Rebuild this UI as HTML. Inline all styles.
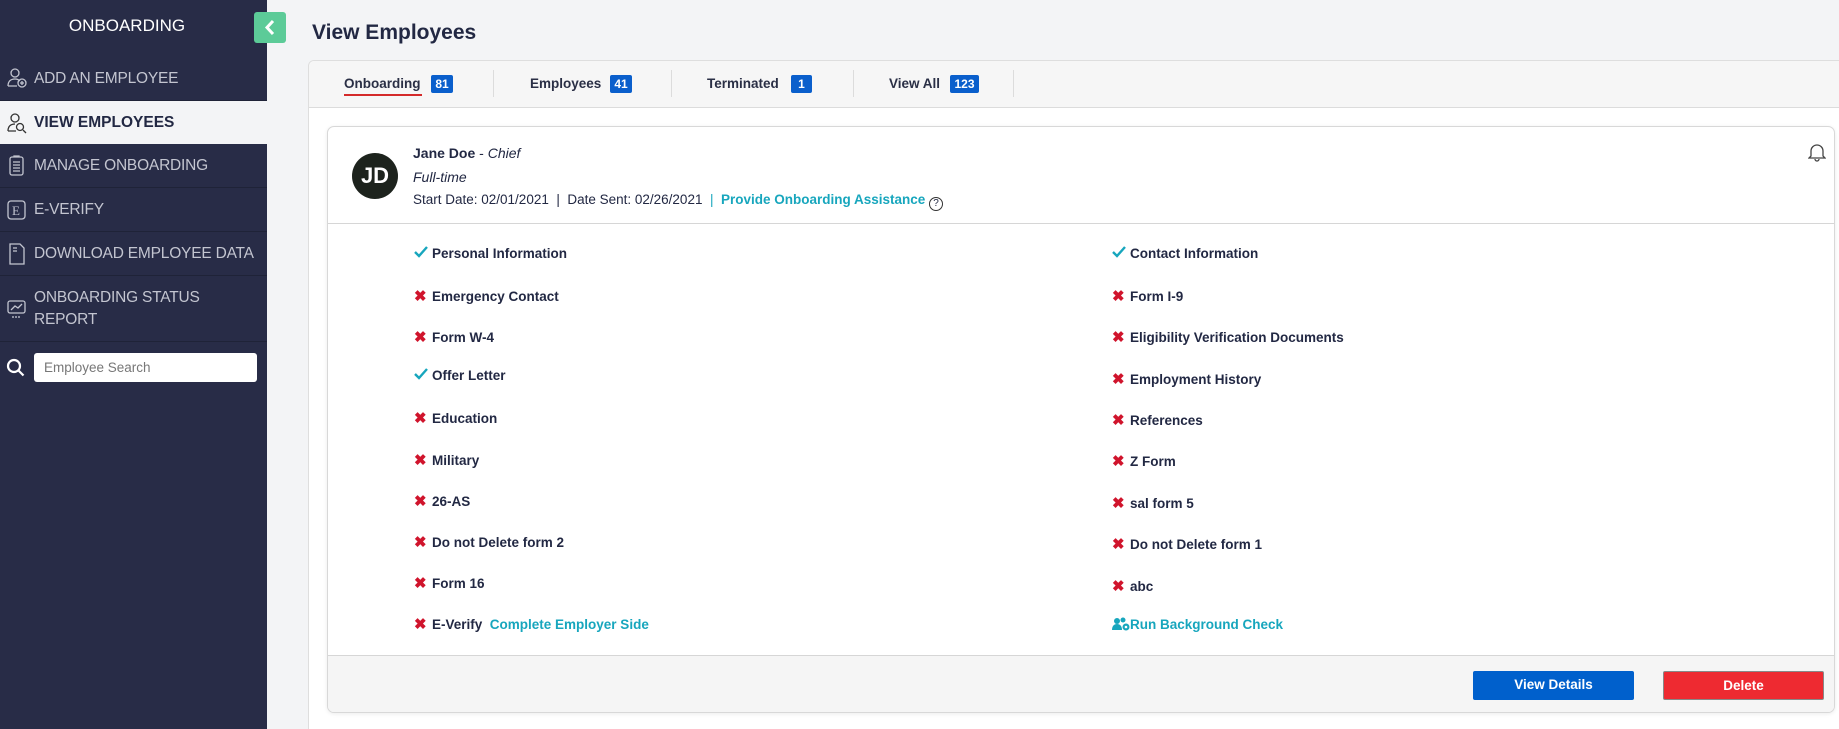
<!DOCTYPE html>
<html><head><meta charset="utf-8"><style>
*{margin:0;padding:0;box-sizing:border-box}
html,body{width:1839px;height:729px;overflow:hidden}
body{background:#f3f4f6;font-family:"Liberation Sans",sans-serif;position:relative;color:#222843}
.a{position:absolute;white-space:nowrap}
#sb{position:absolute;left:0;top:0;width:267px;height:729px;background:#282c47}
.mi{position:absolute;left:0;width:267px;color:#c3c5d0;font-size:15.5px;letter-spacing:-0.2px;border-bottom:1px solid #1f2338}
.mi svg{position:absolute;left:7px}
.tab{position:absolute;top:76px;font-size:13.5px;font-weight:bold;color:#2a2f45}
.bd{position:absolute;top:75px;height:18px;background:#0a5fcc;color:#fff;font-size:12px;font-weight:bold;text-align:center;line-height:18px;border-radius:2px}
.dv{position:absolute;top:70px;width:1px;height:27px;background:#dcdcdc}
.it{position:absolute;font-size:13.5px;font-weight:bold;color:#222843;white-space:nowrap}
.x{color:#d0142c;font-size:15px;font-weight:bold;margin-right:8px;display:inline-block;width:10px}
.c{margin-right:4px;display:inline-block;width:14px}
.btn{position:absolute;top:671px;width:161px;height:29px;color:#fff;font-size:13.5px;font-weight:bold;text-align:center;line-height:28px;border-radius:2px}
</style></head><body>
<div id="sb">
<div class="a" style="left:0;width:254px;text-align:center;top:16px;color:#fff;font-size:17px">ONBOARDING</div>
<div class="mi" style="top:56px;height:45px;line-height:45px"><svg width="20" height="22" viewBox="0 0 20 22" style="top:11px" fill="none" stroke="#c3c5d0" stroke-width="1.3"><circle cx="8" cy="6" r="4"/><path d="M1 19c0-5 3-7 7-7 2 0 4 1 5 2M1 19h9"/><circle cx="15" cy="16" r="4"/><path d="M15 14v4M13 16h4"/></svg><span style="position:absolute;left:34px">ADD AN EMPLOYEE</span></div>
<div style="position:absolute;top:101px;left:0;width:267px;height:43px;background:#f3f4f6"><svg width="20" height="22" viewBox="0 0 20 22" style="position:absolute;left:7px;top:11px" fill="none" stroke="#333" stroke-width="1.3"><circle cx="8" cy="6" r="4"/><path d="M1 19c0-5 3-7 7-7M1 19h8"/><circle cx="13" cy="15" r="3.5"/><path d="M16 18l3 3"/></svg><span class="a" style="left:34px;top:13px;font-size:15.5px;font-weight:bold;color:#222843">VIEW EMPLOYEES</span></div>
<div class="mi" style="top:144px;height:44px;line-height:44px"><svg width="20" height="22" viewBox="0 0 20 22" style="top:11px" fill="none" stroke="#c3c5d0" stroke-width="1.3"><rect x="3" y="2" width="13" height="18" rx="2"/><path d="M6 7h7M6 10h7M6 13h7M6 16h7M7 2V1h5v1"/></svg><span style="position:absolute;left:34px">MANAGE ONBOARDING</span></div>
<div class="mi" style="top:188px;height:44px;line-height:44px"><svg width="20" height="22" viewBox="0 0 20 22" style="top:11px" fill="none" stroke="#c3c5d0" stroke-width="1.3"><rect x="1" y="2" width="17" height="18" rx="3"/><text x="5" y="16" font-size="13" fill="#c3c5d0" stroke="none" font-family="Liberation Serif">E</text></svg><span style="position:absolute;left:34px">E-VERIFY</span></div>
<div class="mi" style="top:232px;height:44px;line-height:44px"><svg width="20" height="22" viewBox="0 0 20 22" style="top:11px" fill="none" stroke="#c3c5d0" stroke-width="1.3"><path d="M3 1h10l4 4v16H3z"/><path d="M6 5h4M6 8h4"/></svg><span style="position:absolute;left:34px">DOWNLOAD EMPLOYEE DATA</span></div>
<div class="mi" style="top:276px;height:66px;line-height:22px"><svg width="20" height="22" viewBox="0 0 20 22" style="top:22px" fill="none" stroke="#c3c5d0" stroke-width="1.3"><rect x="1" y="3" width="17" height="12" rx="2"/><path d="M4 12l4-4 3 2 4-4M6 18v2M9 18v2M12 18v2"/></svg><span style="position:absolute;left:34px;top:11px">ONBOARDING STATUS<br>REPORT</span></div>
<svg width="20" height="20" viewBox="0 0 20 20" style="position:absolute;left:6px;top:358px" fill="none" stroke="#fff" stroke-width="2.2"><circle cx="8" cy="8" r="6"/><path d="M12.5 12.5l5 5"/></svg>
<div style="position:absolute;left:34px;top:353px;width:223px;height:29px;background:#fff;border-radius:3px;font-size:13.5px;color:#777;padding:7px 10px">Employee Search</div>
</div>
<div style="position:absolute;left:254px;top:12px;width:32px;height:31px;background:#5ccb98;border-radius:3px"><svg width="32" height="31" viewBox="0 0 32 31"><path d="M19 9l-6 6.5 6 6.5" fill="none" stroke="#fff" stroke-width="3"/></svg></div>
<div class="a" style="left:312px;top:21px;font-size:21px;font-weight:bold;color:#222843">View Employees</div>
<div style="position:absolute;left:308px;top:60px;width:1540px;height:700px;background:#fff;border:1px solid #dedede;border-radius:6px"></div>
<div style="position:absolute;left:309px;top:61px;width:1540px;height:47px;background:#f6f6f6;border-bottom:1px solid #dcdcdc;border-radius:6px 0 0 0"></div>
<div class="tab" style="left:344px">Onboarding</div><div style="position:absolute;left:344px;top:94px;width:78px;height:2px;background:#d42a2a"></div>
<div class="bd" style="left:431px;width:22px">81</div><div class="dv" style="left:493px"></div>
<div class="tab" style="left:530px">Employees</div><div class="bd" style="left:610px;width:22px">41</div><div class="dv" style="left:671px"></div>
<div class="tab" style="left:707px">Terminated</div><div class="bd" style="left:791px;width:21px">1</div><div class="dv" style="left:853px"></div>
<div class="tab" style="left:889px">View All</div><div class="bd" style="left:950px;width:29px">123</div><div class="dv" style="left:1013px"></div>
<div style="position:absolute;left:327px;top:126px;width:1508px;height:587px;background:#fff;border:1px solid #d8d8d8;border-radius:7px;box-shadow:0 1px 4px rgba(0,0,0,.08);overflow:hidden">
<div style="position:absolute;left:0;top:96px;width:100%;height:1px;background:#d6d6d6"></div>
<div style="position:absolute;left:0;top:528px;width:100%;height:60px;background:#f5f5f5;border-top:1px solid #d6d6d6"></div>
</div>
<div style="position:absolute;left:352px;top:153px;width:46px;height:46px;border-radius:50%;background:#1d231d;color:#fff;font-size:22px;font-weight:bold;text-align:center;line-height:46px">JD</div>
<div class="a" style="left:413px;top:145px;font-size:14px"><b>Jane Doe</b> - <i>Chief</i></div>
<div class="a" style="left:413px;top:169px;font-size:14px;font-style:italic">Full-time</div>
<div class="a" style="left:413px;top:192px;font-size:13.5px">Start Date: 02/01/2021 &nbsp;|&nbsp; Date Sent: 02/26/2021 &nbsp;<span style="color:#17a6bd">| &nbsp;<b>Provide Onboarding Assistance</b></span> <span style="display:inline-block;width:14px;height:14px;border:1.3px solid #333;border-radius:50%;font-size:10px;text-align:center;line-height:12px;vertical-align:-2px">?</span></div>
<svg width="18" height="20" viewBox="0 0 18 20" style="position:absolute;left:1808px;top:142px" fill="none" stroke="#444" stroke-width="1.3"><path d="M3 14V9a6 6 0 0112 0v5l2 2H1z M7 17a2 2 0 004 0"/></svg>
<div class="it" style="left:414px;top:246px"><span class="c"><svg width="14" height="12" viewBox="0 0 14 12"><path d="M1 6l4 4 8-9" fill="none" stroke="#17a6bd" stroke-width="2.4"/></svg></span>Personal Information</div>
<div class="it" style="left:414px;top:287px"><span class="x">✖</span>Emergency Contact</div>
<div class="it" style="left:414px;top:328px"><span class="x">✖</span>Form W-4</div>
<div class="it" style="left:414px;top:368px"><span class="c"><svg width="14" height="12" viewBox="0 0 14 12"><path d="M1 6l4 4 8-9" fill="none" stroke="#17a6bd" stroke-width="2.4"/></svg></span>Offer Letter</div>
<div class="it" style="left:414px;top:409px"><span class="x">✖</span>Education</div>
<div class="it" style="left:414px;top:451px"><span class="x">✖</span>Military</div>
<div class="it" style="left:414px;top:492px"><span class="x">✖</span>26-AS</div>
<div class="it" style="left:414px;top:533px"><span class="x">✖</span>Do not Delete form 2</div>
<div class="it" style="left:414px;top:574px"><span class="x">✖</span>Form 16</div>
<div class="it" style="left:414px;top:615px"><span class="x">✖</span>E-Verify &nbsp;<span style="color:#17a6bd">Complete Employer Side</span></div>
<div class="it" style="left:1112px;top:246px"><span class="c"><svg width="14" height="12" viewBox="0 0 14 12"><path d="M1 6l4 4 8-9" fill="none" stroke="#17a6bd" stroke-width="2.4"/></svg></span>Contact Information</div>
<div class="it" style="left:1112px;top:287px"><span class="x">✖</span>Form I-9</div>
<div class="it" style="left:1112px;top:328px"><span class="x">✖</span>Eligibility Verification Documents</div>
<div class="it" style="left:1112px;top:370px"><span class="x">✖</span>Employment History</div>
<div class="it" style="left:1112px;top:411px"><span class="x">✖</span>References</div>
<div class="it" style="left:1112px;top:452px"><span class="x">✖</span>Z Form</div>
<div class="it" style="left:1112px;top:494px"><span class="x">✖</span>sal form 5</div>
<div class="it" style="left:1112px;top:535px"><span class="x">✖</span>Do not Delete form 1</div>
<div class="it" style="left:1112px;top:577px"><span class="x">✖</span>abc</div>
<div class="it" style="left:1112px;top:617px;color:#17a6bd"><svg width="18" height="14" viewBox="0 0 18 14" style="vertical-align:-2px"><circle cx="5" cy="4" r="3" fill="#17a6bd"/><circle cx="11" cy="3" r="2.5" fill="#17a6bd"/><path d="M0 13c0-4 2-6 5-6s5 2 5 6z" fill="#17a6bd"/><circle cx="14" cy="10" r="3.5" fill="#17a6bd"/><circle cx="14" cy="10" r="1.3" fill="#fff"/></svg>Run Background Check</div>
<div class="btn" style="left:1473px;background:#0060cc">View Details</div>
<div class="btn" style="left:1663px;background:#ee2a31;border:1px solid #888;line-height:27px">Delete</div>
</body></html>
